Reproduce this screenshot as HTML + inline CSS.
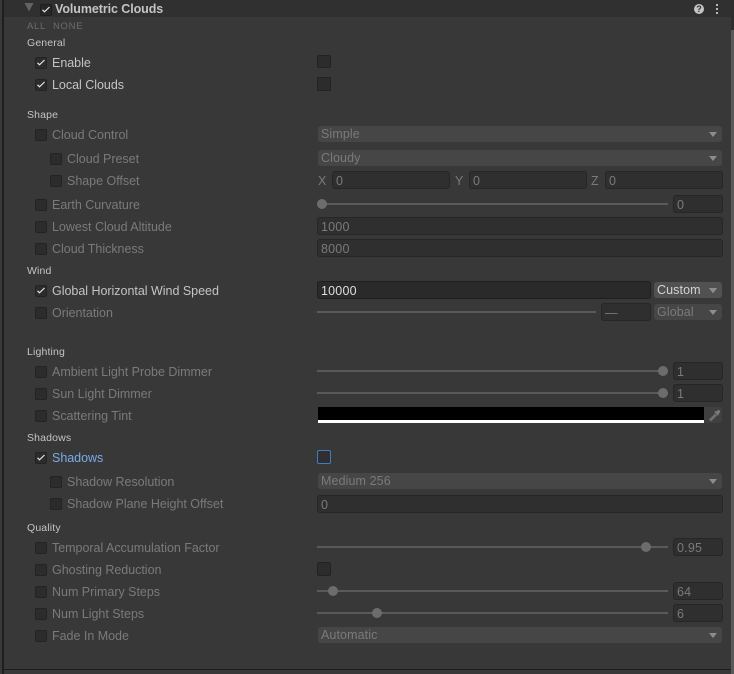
<!DOCTYPE html>
<html><head><meta charset="utf-8">
<style>
html,body{margin:0;padding:0;width:734px;height:674px;overflow:hidden;background:#383838}
body{position:relative;font-family:"Liberation Sans",sans-serif;font-size:12.5px;color:#7a7a7a}
div,span,svg{position:absolute;box-sizing:border-box}
.t{white-space:nowrap;line-height:16px;height:16px;letter-spacing:-.02px;margin-top:1px}
.on{color:#c4c4c4}
.h{left:27px;font-size:10.5px;color:#c4c4c4;letter-spacing:.15px}
.c{width:12px;height:12px;background:#2c2c2c;border:1px solid #232323;border-radius:2px}
.c svg{left:0;top:0}
.f{background:#2f2f2f;border:1px solid #262626;border-radius:3px;height:18px;line-height:18px;padding-left:3px;letter-spacing:.2px;white-space:nowrap}
.d{background:#464646;border-radius:3px;height:16px;line-height:17px;padding-left:3px;letter-spacing:.1px;white-space:nowrap}
.d:after{content:"";position:absolute;right:5px;top:6px;border-left:4.5px solid transparent;border-right:4.5px solid transparent;border-top:5px solid #8c8c8c}
.tr{height:2px;background:#5a5a5a;top:0}
.k{width:10px;height:10px;border-radius:50%;background:#6c6c6c}
</style></head><body>
<div style="left:2px;top:0;width:2px;height:674px;background:#1f1f1f"></div>
<div style="left:731px;top:30px;width:3px;height:644px;background:#5a5a5a"></div>
<div style="left:731px;top:0;width:3px;height:30px;background:#2e2e2e"></div>
<div style="left:4px;top:0;width:727px;height:17px;background:#303030"></div>
<div style="left:4px;top:669px;width:727px;height:1px;background:#1c1c1c"></div>

<svg style="left:24px;top:3px" width="10" height="9"><path d="M0.500 0H9.500L5 8.500Z" fill="#626262"/></svg>
<div class="c" style="left:40px;top:4px;background:#262626;border-color:#1e1e1e"><svg width="10" height="10"><path d="M1.500 4.800L3.500 6.800L8.500 2" fill="none" stroke="#e6e6e6" stroke-width="1.200"/></svg></div>
<span class="t" style="left:55px;top:0;font-weight:bold;color:#c4c4c4;font-size:12.5px;letter-spacing:-.08px">Volumetric Clouds</span>
<div style="left:694px;top:4px;width:10px;height:10px;border-radius:50%;background:#c4c4c4;color:#303030;font-size:9px;font-weight:bold;line-height:10px;text-align:center">?</div>
<div style="left:716px;top:4px;width:2px;height:2px;background:#b8b8b8"></div>
<div style="left:716px;top:8px;width:2px;height:2px;background:#b8b8b8"></div>
<div style="left:716px;top:12px;width:2px;height:2px;background:#b8b8b8"></div>

<span class="t" style="left:27px;top:18px;font-size:9.5px;letter-spacing:.7px;color:#6c6c6c">ALL</span>
<span class="t" style="left:53px;top:18px;font-size:9.5px;letter-spacing:.7px;color:#6c6c6c">NONE</span>

<span class="t h" style="top:34px">General</span>
<span class="t h" style="top:106px">Shape</span>
<span class="t h" style="top:262px">Wind</span>
<span class="t h" style="top:343px">Lighting</span>
<span class="t h" style="top:429px">Shadows</span>
<span class="t h" style="top:519px">Quality</span>

<div class="c" style="left:35px;top:57px"><svg width="10" height="10"><path d="M1.500 4.800L3.500 6.800L8.500 2" fill="none" stroke="#e6e6e6" stroke-width="1.200"/></svg></div>
<span class="t on" style="left:52px;top:54px">Enable</span>
<div class="c" style="left:35px;top:79px"><svg width="10" height="10"><path d="M1.500 4.800L3.500 6.800L8.500 2" fill="none" stroke="#e6e6e6" stroke-width="1.200"/></svg></div>
<span class="t on" style="left:52px;top:76px">Local Clouds</span>
<div class="c" style="left:317px;top:55px;width:14px;height:13px"></div>
<div class="c" style="left:317px;top:77px;width:14px;height:14px"></div>

<div class="c" style="left:35px;top:129px"></div><span class="t" style="left:52px;top:126px">Cloud Control</span>
<div class="c" style="left:50px;top:153px"></div><span class="t" style="left:67px;top:150px">Cloud Preset</span>
<div class="c" style="left:50px;top:175px"></div><span class="t" style="left:67px;top:172px">Shape Offset</span>
<div class="c" style="left:35px;top:199px"></div><span class="t" style="left:52px;top:196px">Earth Curvature</span>
<div class="c" style="left:35px;top:221px"></div><span class="t" style="left:52px;top:218px">Lowest Cloud Altitude</span>
<div class="c" style="left:35px;top:243px"></div><span class="t" style="left:52px;top:240px">Cloud Thickness</span>

<div class="d" style="left:318px;top:126px;width:404px">Simple</div>
<div class="d" style="left:318px;top:150px;width:404px">Cloudy</div>
<span class="t" style="left:318px;top:172px">X</span>
<div class="f" style="left:332px;top:171px;width:118px">0</div>
<span class="t" style="left:455px;top:172px">Y</span>
<div class="f" style="left:469px;top:171px;width:118px">0</div>
<span class="t" style="left:591px;top:172px">Z</span>
<div class="f" style="left:605px;top:171px;width:118px">0</div>
<div class="tr" style="left:318px;top:203px;width:350px"></div>
<div class="k" style="left:317px;top:199px"></div>
<div class="f" style="left:673px;top:195px;width:50px">0</div>
<div class="f" style="left:317px;top:217px;width:406px">1000</div>
<div class="f" style="left:317px;top:239px;width:406px">8000</div>

<div class="c" style="left:35px;top:285px"><svg width="10" height="10"><path d="M1.500 4.800L3.500 6.800L8.500 2" fill="none" stroke="#e6e6e6" stroke-width="1.200"/></svg></div>
<span class="t on" style="left:52px;top:282px">Global Horizontal Wind Speed</span>
<div class="c" style="left:35px;top:307px"></div><span class="t" style="left:52px;top:304px">Orientation</span>
<div class="f" style="left:317px;top:281px;width:334px;background:#2a2a2a;border-color:#1f1f1f;color:#dedede">10000</div>
<div class="d" style="left:654px;top:282px;width:68px;background:#515151;color:#d2d2d2">Custom<span style="position:absolute;right:5px;top:6px;border-left:4.5px solid transparent;border-right:4.5px solid transparent;border-top:5px solid #c4c4c4"></span></div>
<div class="tr" style="left:317px;top:311px;width:279px"></div>
<div class="f" style="left:601px;top:303px;width:50px">—</div>
<div class="d" style="left:654px;top:304px;width:68px">Global</div>

<div class="c" style="left:35px;top:366px"></div><span class="t" style="left:52px;top:363px">Ambient Light Probe Dimmer</span>
<div class="c" style="left:35px;top:388px"></div><span class="t" style="left:52px;top:385px">Sun Light Dimmer</span>
<div class="c" style="left:35px;top:410px"></div><span class="t" style="left:52px;top:407px">Scattering Tint</span>
<div class="tr" style="left:317px;top:370px;width:351px"></div>
<div class="k" style="left:658px;top:366px"></div>
<div class="f" style="left:673px;top:362px;width:50px">1</div>
<div class="tr" style="left:317px;top:392px;width:351px"></div>
<div class="k" style="left:658px;top:388px"></div>
<div class="f" style="left:673px;top:384px;width:50px">1</div>
<div style="left:318px;top:407px;width:386px;height:16px;background:#000"></div>
<div style="left:318px;top:420px;width:386px;height:3px;background:#fff"></div>
<div style="left:704px;top:407px;width:18px;height:16px;background:#404040;border-radius:0 3px 3px 0"></div>
<svg style="left:708px;top:408px" width="13" height="14"><path d="M2 12.500L8 6.500" stroke="#6e6e6e" stroke-width="3" fill="none"/><path d="M7 3.500L10.500 7" stroke="#7c7c7c" stroke-width="1.800" fill="none"/><path d="M8.500 4L10.500 2.500L11.500 3L11.500 4L10 6Z" fill="#7c7c7c" stroke="#7c7c7c"/></svg>

<div class="c" style="left:35px;top:452px"><svg width="10" height="10"><path d="M1.500 4.800L3.500 6.800L8.500 2" fill="none" stroke="#e6e6e6" stroke-width="1.200"/></svg></div>
<span class="t" style="left:52px;top:449px;color:#7babe8">Shadows</span>
<div class="c" style="left:317px;top:450px;width:14px;height:14px;border:1.500px solid #3f7dc0;background:#2f2f2f"></div>
<div class="c" style="left:50px;top:476px"></div><span class="t" style="left:67px;top:473px">Shadow Resolution</span>
<div class="c" style="left:50px;top:498px"></div><span class="t" style="left:67px;top:495px">Shadow Plane Height Offset</span>
<div class="d" style="left:318px;top:473px;width:404px">Medium 256</div>
<div class="f" style="left:317px;top:495px;width:406px">0</div>

<div class="c" style="left:35px;top:542px"></div><span class="t" style="left:52px;top:539px">Temporal Accumulation Factor</span>
<div class="c" style="left:35px;top:564px"></div><span class="t" style="left:52px;top:561px">Ghosting Reduction</span>
<div class="c" style="left:35px;top:586px"></div><span class="t" style="left:52px;top:583px">Num Primary Steps</span>
<div class="c" style="left:35px;top:608px"></div><span class="t" style="left:52px;top:605px">Num Light Steps</span>
<div class="c" style="left:35px;top:630px"></div><span class="t" style="left:52px;top:627px">Fade In Mode</span>
<div class="tr" style="left:317px;top:546px;width:351px"></div>
<div class="k" style="left:641px;top:542px"></div>
<div class="f" style="left:673px;top:538px;width:50px">0.95</div>
<div class="c" style="left:317px;top:562px;width:14px;height:14px"></div>
<div class="tr" style="left:317px;top:590px;width:351px"></div>
<div class="k" style="left:328px;top:586px"></div>
<div class="f" style="left:673px;top:582px;width:50px">64</div>
<div class="tr" style="left:317px;top:612px;width:351px"></div>
<div class="k" style="left:372px;top:608px"></div>
<div class="f" style="left:673px;top:604px;width:50px">6</div>
<div class="d" style="left:318px;top:627px;width:404px">Automatic</div>
</body></html>
